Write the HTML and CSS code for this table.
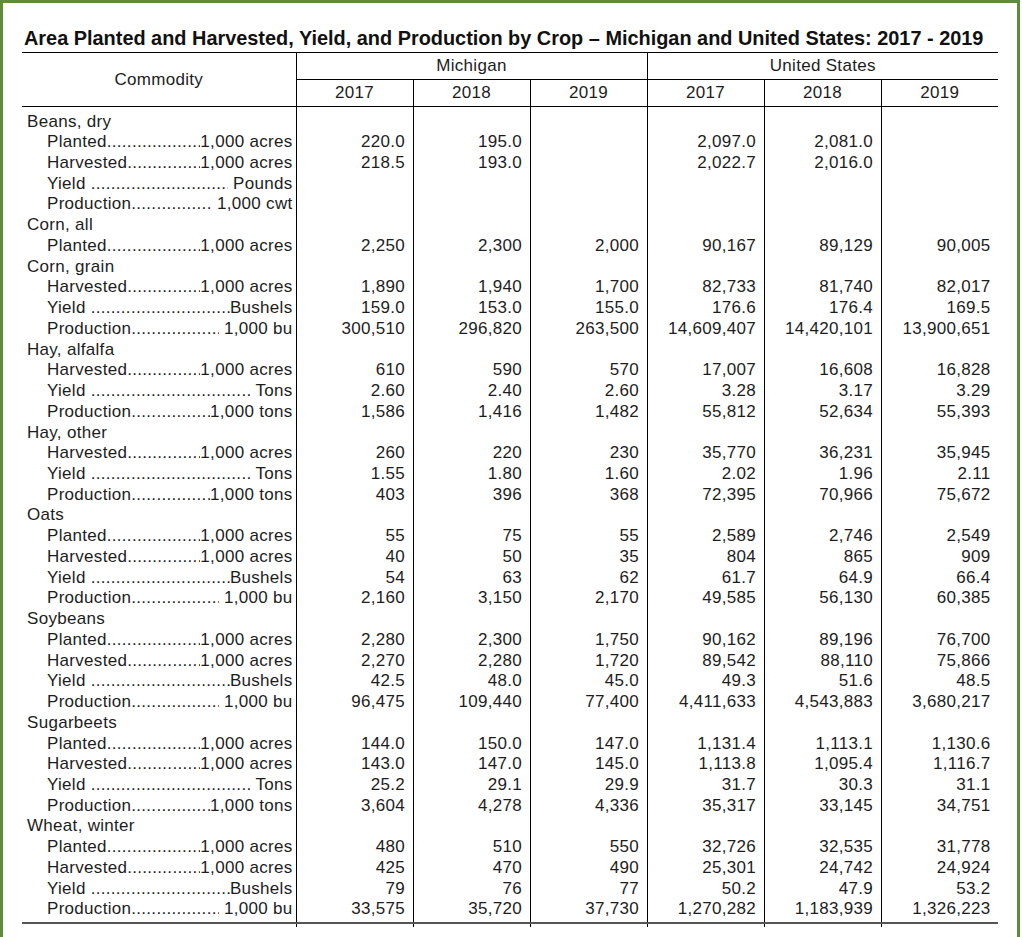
FILE: index.html
```html
<!DOCTYPE html>
<html lang="en">
<head>
    <meta charset="UTF-8">
    <meta name="viewport" content="width=device-width, initial-scale=1.0">
    <title>Crop Production - Michigan and United States</title>
    <link rel="stylesheet" href="styles.css">
</head>
<body>
<div class="sheet">

    <h1 class="title">Area Planted and Harvested, Yield, and Production by Crop – Michigan and United States: 2017 - 2019</h1>

    <table class="crops">
        <colgroup>
            <col class="c-name">
            <col class="c-num"><col class="c-num"><col class="c-num">
            <col class="c-num"><col class="c-num"><col class="c-num">
        </colgroup>
        <thead>
            <tr>
                <th rowspan="2" class="commodity">Commodity</th>
                <th colspan="3" class="region">Michigan</th>
                <th colspan="3" class="region">United States</th>
            </tr>
            <tr class="years">
                <th>2017</th><th>2018</th><th>2019</th>
                <th>2017</th><th>2018</th><th>2019</th>
            </tr>
        </thead>
        <tbody>
            <tr class="first"><td class="group">Beans, dry</td><td></td><td></td><td></td><td></td><td></td><td></td></tr>
            <tr><td><div class="item"><span>Planted</span><span class="dots"></span><span>1,000 acres</span></div></td><td>220.0</td><td>195.0</td><td></td><td>2,097.0</td><td>2,081.0</td><td></td></tr>
            <tr><td><div class="item"><span>Harvested</span><span class="dots"></span><span>1,000 acres</span></div></td><td>218.5</td><td>193.0</td><td></td><td>2,022.7</td><td>2,016.0</td><td></td></tr>
            <tr><td><div class="item"><span>Yield&nbsp;</span><span class="dots"></span><span>&nbsp;Pounds</span></div></td><td></td><td></td><td></td><td></td><td></td><td></td></tr>
            <tr><td><div class="item"><span>Production</span><span class="dots"></span><span>&nbsp;1,000 cwt</span></div></td><td></td><td></td><td></td><td></td><td></td><td></td></tr>

            <tr><td class="group">Corn, all</td><td></td><td></td><td></td><td></td><td></td><td></td></tr>
            <tr><td><div class="item"><span>Planted</span><span class="dots"></span><span>1,000 acres</span></div></td><td>2,250</td><td>2,300</td><td>2,000</td><td>90,167</td><td>89,129</td><td>90,005</td></tr>

            <tr><td class="group">Corn, grain</td><td></td><td></td><td></td><td></td><td></td><td></td></tr>
            <tr><td><div class="item"><span>Harvested</span><span class="dots"></span><span>1,000 acres</span></div></td><td>1,890</td><td>1,940</td><td>1,700</td><td>82,733</td><td>81,740</td><td>82,017</td></tr>
            <tr><td><div class="item"><span>Yield&nbsp;</span><span class="dots"></span><span>Bushels</span></div></td><td>159.0</td><td>153.0</td><td>155.0</td><td>176.6</td><td>176.4</td><td>169.5</td></tr>
            <tr><td><div class="item"><span>Production</span><span class="dots"></span><span>&nbsp;1,000 bu</span></div></td><td>300,510</td><td>296,820</td><td>263,500</td><td>14,609,407</td><td>14,420,101</td><td>13,900,651</td></tr>

            <tr><td class="group">Hay, alfalfa</td><td></td><td></td><td></td><td></td><td></td><td></td></tr>
            <tr><td><div class="item"><span>Harvested</span><span class="dots"></span><span>1,000 acres</span></div></td><td>610</td><td>590</td><td>570</td><td>17,007</td><td>16,608</td><td>16,828</td></tr>
            <tr><td><div class="item"><span>Yield&nbsp;</span><span class="dots"></span><span>&nbsp;Tons</span></div></td><td>2.60</td><td>2.40</td><td>2.60</td><td>3.28</td><td>3.17</td><td>3.29</td></tr>
            <tr><td><div class="item"><span>Production</span><span class="dots"></span><span>1,000 tons</span></div></td><td>1,586</td><td>1,416</td><td>1,482</td><td>55,812</td><td>52,634</td><td>55,393</td></tr>

            <tr><td class="group">Hay, other</td><td></td><td></td><td></td><td></td><td></td><td></td></tr>
            <tr><td><div class="item"><span>Harvested</span><span class="dots"></span><span>1,000 acres</span></div></td><td>260</td><td>220</td><td>230</td><td>35,770</td><td>36,231</td><td>35,945</td></tr>
            <tr><td><div class="item"><span>Yield&nbsp;</span><span class="dots"></span><span>&nbsp;Tons</span></div></td><td>1.55</td><td>1.80</td><td>1.60</td><td>2.02</td><td>1.96</td><td>2.11</td></tr>
            <tr><td><div class="item"><span>Production</span><span class="dots"></span><span>1,000 tons</span></div></td><td>403</td><td>396</td><td>368</td><td>72,395</td><td>70,966</td><td>75,672</td></tr>

            <tr><td class="group">Oats</td><td></td><td></td><td></td><td></td><td></td><td></td></tr>
            <tr><td><div class="item"><span>Planted</span><span class="dots"></span><span>1,000 acres</span></div></td><td>55</td><td>75</td><td>55</td><td>2,589</td><td>2,746</td><td>2,549</td></tr>
            <tr><td><div class="item"><span>Harvested</span><span class="dots"></span><span>1,000 acres</span></div></td><td>40</td><td>50</td><td>35</td><td>804</td><td>865</td><td>909</td></tr>
            <tr><td><div class="item"><span>Yield&nbsp;</span><span class="dots"></span><span>Bushels</span></div></td><td>54</td><td>63</td><td>62</td><td>61.7</td><td>64.9</td><td>66.4</td></tr>
            <tr><td><div class="item"><span>Production</span><span class="dots"></span><span>&nbsp;1,000 bu</span></div></td><td>2,160</td><td>3,150</td><td>2,170</td><td>49,585</td><td>56,130</td><td>60,385</td></tr>

            <tr><td class="group">Soybeans</td><td></td><td></td><td></td><td></td><td></td><td></td></tr>
            <tr><td><div class="item"><span>Planted</span><span class="dots"></span><span>1,000 acres</span></div></td><td>2,280</td><td>2,300</td><td>1,750</td><td>90,162</td><td>89,196</td><td>76,700</td></tr>
            <tr><td><div class="item"><span>Harvested</span><span class="dots"></span><span>1,000 acres</span></div></td><td>2,270</td><td>2,280</td><td>1,720</td><td>89,542</td><td>88,110</td><td>75,866</td></tr>
            <tr><td><div class="item"><span>Yield&nbsp;</span><span class="dots"></span><span>Bushels</span></div></td><td>42.5</td><td>48.0</td><td>45.0</td><td>49.3</td><td>51.6</td><td>48.5</td></tr>
            <tr><td><div class="item"><span>Production</span><span class="dots"></span><span>&nbsp;1,000 bu</span></div></td><td>96,475</td><td>109,440</td><td>77,400</td><td>4,411,633</td><td>4,543,883</td><td>3,680,217</td></tr>

            <tr><td class="group">Sugarbeets</td><td></td><td></td><td></td><td></td><td></td><td></td></tr>
            <tr><td><div class="item"><span>Planted</span><span class="dots"></span><span>1,000 acres</span></div></td><td>144.0</td><td>150.0</td><td>147.0</td><td>1,131.4</td><td>1,113.1</td><td>1,130.6</td></tr>
            <tr><td><div class="item"><span>Harvested</span><span class="dots"></span><span>1,000 acres</span></div></td><td>143.0</td><td>147.0</td><td>145.0</td><td>1,113.8</td><td>1,095.4</td><td>1,116.7</td></tr>
            <tr><td><div class="item"><span>Yield&nbsp;</span><span class="dots"></span><span>&nbsp;Tons</span></div></td><td>25.2</td><td>29.1</td><td>29.9</td><td>31.7</td><td>30.3</td><td>31.1</td></tr>
            <tr><td><div class="item"><span>Production</span><span class="dots"></span><span>1,000 tons</span></div></td><td>3,604</td><td>4,278</td><td>4,336</td><td>35,317</td><td>33,145</td><td>34,751</td></tr>

            <tr><td class="group">Wheat, winter</td><td></td><td></td><td></td><td></td><td></td><td></td></tr>
            <tr><td><div class="item"><span>Planted</span><span class="dots"></span><span>1,000 acres</span></div></td><td>480</td><td>510</td><td>550</td><td>32,726</td><td>32,535</td><td>31,778</td></tr>
            <tr><td><div class="item"><span>Harvested</span><span class="dots"></span><span>1,000 acres</span></div></td><td>425</td><td>470</td><td>490</td><td>25,301</td><td>24,742</td><td>24,924</td></tr>
            <tr><td><div class="item"><span>Yield&nbsp;</span><span class="dots"></span><span>Bushels</span></div></td><td>79</td><td>76</td><td>77</td><td>50.2</td><td>47.9</td><td>53.2</td></tr>
            <tr class="last"><td><div class="item"><span>Production</span><span class="dots"></span><span>&nbsp;1,000 bu</span></div></td><td>33,575</td><td>35,720</td><td>37,730</td><td>1,270,282</td><td>1,183,939</td><td>1,326,223</td></tr>

            <!-- 縦線が下線より少しはみ出す部分 -->
            <tr class="tail"><td></td><td></td><td></td><td></td><td></td><td></td><td></td></tr>
        </tbody>
    </table>

</div>
</body>
</html>
```

FILE: styles.css
```css
body {
    margin: 0;
    background: #fff;
    color: #1d1d1d;
    font-family: "Liberation Sans", Arial, sans-serif;
}

/* 緑の枠（下辺は画面外） */
.sheet {
    width: 995px;
    height: 934px;
    border: 3px solid #5e8c3a;
    border-bottom: none;
    padding: 0 0 0 19px;
    overflow: hidden;
}

.title {
    margin: 0;
    padding: 24px 0 0 2px;
    height: 25px;
    font-size: 19.9px;
    line-height: 22px;
    font-weight: bold;
    color: #111;
    white-space: nowrap;
}

.crops {
    border-collapse: collapse;
    table-layout: fixed;
    width: 976px;
    font-size: 17px;
    letter-spacing: 0.3px;
}

.c-name { width: 274px; }
.c-num { width: 117px; }

.crops th {
    font-weight: normal;
    height: 26px;
    padding: 0;
    line-height: 26px;
    text-align: center;
    border-right: 1px solid #000;
    border-bottom: 1px solid #000;
}

.crops thead tr:first-child th {
    border-top: 1px solid #000;
}

.crops thead tr:first-child th:last-child,
.crops .years th:last-child {
    border-right: none;
}

.crops td {
    padding: 0 7.5px 0 0;
    height: 20.74px;
    line-height: 20.74px;
    text-align: right;
    white-space: nowrap;
    border-right: 1px solid #000;
}

.crops td:last-child {
    border-right: none;
}

.crops td:first-child {
    text-align: left;
    padding: 0 3px 0 25px;
}

.crops td.group {
    padding-left: 5px;
}

.crops tr.first td {
    padding-top: 4.5px;
}

.crops tr.last td {
    padding-bottom: 2px;
    border-bottom: 2px solid #555;
}

.crops tr.tail td {
    height: 3px;
    line-height: 3px;
    padding: 0;
}

/* 点線リーダー */
.item {
    display: flex;
}

.dots {
    flex: 1;
    min-width: 0;
    overflow: hidden;
}

.dots::before {
    content: "................................................................................";
    white-space: nowrap;
}
```
